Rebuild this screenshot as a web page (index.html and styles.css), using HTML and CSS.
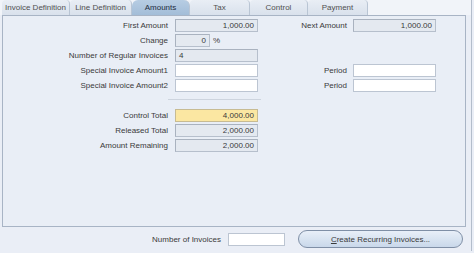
FILE: index.html
```html
<!DOCTYPE html>
<html>

	<head>
		<meta charset="UTF-8">
		<title>Recurring Invoices</title>
		<link rel="stylesheet" href="styles.css">
	</head>

	<body>
		<div class="frame">
			<div class="tabs">
				<div class="tab">Invoice Definition</div>
				<div class="tab">Line Definition</div>
				<div class="tab active">Amounts</div>
				<div class="tab">Tax</div>
				<div class="tab">Control</div>
				<div class="tab">Payment</div>
			</div>
			<div class="panel">
				<div class="row">
					<label class="label">First Amount</label>
					<div class="field ro num">1,000.00</div>
					<label class="label2">Next Amount</label>
					<div class="field ro num">1,000.00</div>
				</div>
				<div class="row">
					<label class="label">Change</label>
					<div class="field ro num short">0</div>
					<span class="unit">%</span>
				</div>
				<div class="row">
					<label class="label">Number of Regular Invoices</label>
					<div class="field ro">4</div>
				</div>
				<div class="row">
					<label class="label">Special Invoice Amount1</label>
					<div class="field"></div>
					<label class="label2">Period</label>
					<div class="field"></div>
				</div>
				<div class="row">
					<label class="label">Special Invoice Amount2</label>
					<div class="field"></div>
					<label class="label2">Period</label>
					<div class="field"></div>
				</div>
				<div class="row spacer">
					<div class="sep"></div>
				</div>
				<div class="row">
					<label class="label">Control Total</label>
					<div class="field req num">4,000.00</div>
				</div>
				<div class="row">
					<label class="label">Released Total</label>
					<div class="field ro num">2,000.00</div>
				</div>
				<div class="row">
					<label class="label">Amount Remaining</label>
					<div class="field ro num">2,000.00</div>
				</div>
			</div>
			<div class="bottom">
				<label class="blabel">Number of Invoices</label>
				<div class="field bfield"></div>
				<button class="btn"><u>C</u>reate Recurring Invoices...</button>
			</div>
		</div>
	</body>

</html>
```

FILE: styles.css
```css
* {
	margin: 0;
	padding: 0;
	box-sizing: border-box;
}

body {
	background: #eaeef6;
	font-family: "Liberation Sans", Arial, sans-serif;
	font-size: 8px;
	color: #3a3a3a;
}

.frame {
	width: 472px;
	height: 251px;
	border-right: 1px solid #b3bdcb;
}

/* 选项卡 */
.tabs {
	display: flex;
	height: 15px;
	padding-left: 2px;
	background: #f1f4f9;
}

.tab {
	height: 15px;
	line-height: 15px;
	text-align: center;
	color: #505050;
	background: linear-gradient(#e9eef5, #d9e1ec);
	border-right: 1px solid #b9c5d4;
	border-radius: 4px 4px 0 0;
}

.tab:nth-child(1) { width: 68px; }
.tab:nth-child(2) { width: 62px; }
.tab:nth-child(3) { width: 58px; }
.tab:nth-child(4) { width: 60px; }
.tab:nth-child(5) { width: 58px; }
.tab:nth-child(6) { width: 60px; }

.tab.active {
	background: linear-gradient(#b7cde3, #a3bdd8);
	color: #1e2d40;
	border-radius: 6px 6px 0 0;
}

/* 主面板 */
.panel {
	margin-left: 2px;
	width: 464px;
	height: 212px;
	border: 1px solid #a8b4c5;
	background: #e9eef6;
	padding-top: 3px;
}

.row {
	display: flex;
	align-items: center;
	height: 13px;
	margin-bottom: 2px;
}

.label {
	width: 172px;
	padding-right: 7px;
	text-align: right;
}

.label2 {
	width: 95px;
	padding-right: 6px;
	text-align: right;
}

.field {
	width: 83px;
	height: 13px;
	line-height: 11px;
	padding: 0 3px;
	background: #fff;
	border: 1px solid #bcc5d2;
	color: #3a3a3a;
}

.field.ro {
	background: #e4e9f0;
	border-color: #b6bfcc;
	border-top-color: #a9b2bf;
	border-left-color: #a9b2bf;
}

.field.req {
	background: #fbe7a2;
	border-color: #c7bb92;
}

.field.num {
	text-align: right;
}

.field.short {
	width: 35px;
}

.unit {
	margin-left: 3px;
}

.spacer {
	position: relative;
}

.sep {
	position: absolute;
	left: 165px;
	top: 5px;
	width: 93px;
	height: 1px;
	background: #cdd4de;
}

/* 底部 */
.bottom {
	display: flex;
	align-items: center;
	justify-content: flex-end;
	height: 24px;
	padding-right: 8px;
}

.bfield {
	width: 57px;
	margin-left: 7px;
}

.btn {
	width: 165px;
	height: 18px;
	margin-left: 13px;
	border: 1px solid #7f8fa6;
	border-radius: 9px;
	background: linear-gradient(#e8eff8, #c9d8ea);
	font-family: "Liberation Sans", Arial, sans-serif;
	font-size: 8px;
	color: #3a3a3a;
}
```
